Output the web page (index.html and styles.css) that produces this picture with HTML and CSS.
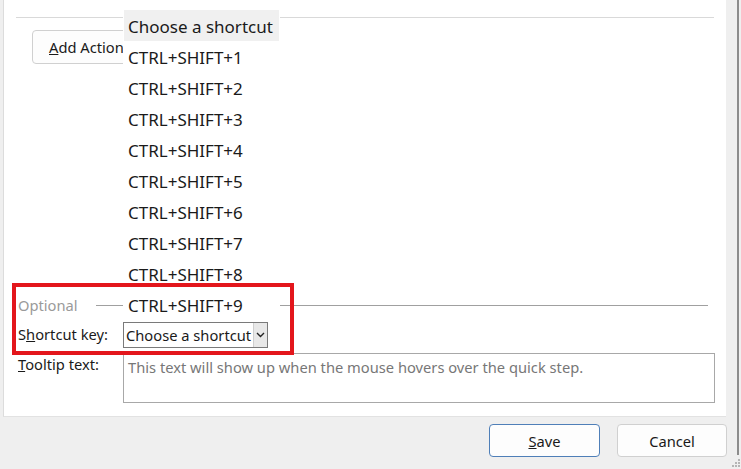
FILE: index.html
```html
<!DOCTYPE html>
<html lang="en">
<head>
  <meta charset="UTF-8">
  <title>Quick Step</title>
  <link rel="stylesheet" href="styles.css">
</head>
<body>
  <div class="window">
    <div class="panel">
      <div class="rule"></div>
      <div class="add-row">
        <button class="btn add-btn"><u>A</u>dd Action</button>
      </div>

      <div class="optional">
        <span class="optional-label">Optional</span>
        <span class="optional-line"></span>
      </div>

      <div class="field">
        <label class="field-label">S<u>h</u>ortcut key:</label>
        <div class="select">
          <span class="select-value">Choose a shortcut</span>
          <span class="select-arrow">
            <svg width="9" height="6" viewBox="0 0 9 6"><path d="M1 1 L4.5 4.5 L8 1" fill="none" stroke="#222" stroke-width="1.4"/></svg>
          </span>
        </div>
      </div>

      <div class="field tooltip-field">
        <label class="field-label"><u>T</u>ooltip text:</label>
        <div class="textarea">This text will show up when the mouse hovers over the quick step.</div>
      </div>

      <!-- open dropdown list of the shortcut select -->
      <ul class="dropdown">
        <li class="active">Choose a shortcut</li>
        <li>CTRL+SHIFT+1</li>
        <li>CTRL+SHIFT+2</li>
        <li>CTRL+SHIFT+3</li>
        <li>CTRL+SHIFT+4</li>
        <li>CTRL+SHIFT+5</li>
        <li>CTRL+SHIFT+6</li>
        <li>CTRL+SHIFT+7</li>
        <li>CTRL+SHIFT+8</li>
        <li>CTRL+SHIFT+9</li>
      </ul>

      <!-- annotation box -->
      <div class="highlight"></div>
    </div>

    <div class="footer">
      <button class="btn save-btn"><u>S</u>ave</button>
      <button class="btn cancel-btn">Cancel</button>
    </div>

    <div class="scroll-edge"></div>
    <svg class="grip" width="9" height="9" viewBox="0 0 9 9">
      <rect x="7" y="1" width="2" height="2" fill="#b5b5b5"/>
      <rect x="4" y="4" width="2" height="2" fill="#b5b5b5"/>
      <rect x="7" y="4" width="2" height="2" fill="#b5b5b5"/>
      <rect x="1" y="7" width="2" height="2" fill="#b5b5b5"/>
      <rect x="4" y="7" width="2" height="2" fill="#b5b5b5"/>
      <rect x="7" y="7" width="2" height="2" fill="#b5b5b5"/>
    </svg>
  </div>
</body>
</html>
```

FILE: styles.css
```css
* {
  box-sizing: border-box;
}

body {
  margin: 0;
  background: #efefef;
  font-family: 'Noto Sans', 'Segoe UI', sans-serif;
  font-size: 14.7px;
  color: #1a1a1a;
}

.window {
  position: relative;
  width: 741px;
  height: 469px;
  overflow: hidden;
}

.panel {
  position: relative;
  margin-left: 3px;
  width: 723px;
  height: 417px;
  background: #fff;
  border-left: 1px solid #dcdcdc;
  border-bottom: 1px solid #e2e2e2;
  padding-top: 17px;
}

.rule {
  height: 1px;
  margin: 0 12px 0 12px;
  background: #d9d9d9;
}

.add-row {
  padding: 12px 0 0 28px;
}

.btn {
  font-family: inherit;
  font-size: 14.7px;
  color: #1a1a1a;
  background: #fdfdfd;
  border: 1px solid #d0d0d0;
  border-radius: 4px;
  cursor: pointer;
}

.add-btn {
  height: 34px;
  width: 112px;
  padding: 0 0 0 16px;
  text-align: left;
}

.optional {
  display: flex;
  align-items: center;
  margin: 230px 18px 0 14px;
  height: 22px;
}

.optional-label {
  color: #9a9a9a;
  width: 78px;
}

.optional-line {
  flex: 1;
  height: 1px;
  background: #a0a0a0;
}

.field {
  display: flex;
  margin: 6px 0 0 14px;
}

.field-label {
  width: 105px;
  line-height: 25px;
}

.select {
  display: flex;
  width: 145px;
  height: 26px;
  border: 1px solid #7a7a7a;
  background: #fff;
}

.select-value {
  flex: 1;
  padding-left: 2px;
  line-height: 24px;
  white-space: nowrap;
  overflow: hidden;
}

.select-arrow {
  width: 14px;
  display: flex;
  align-items: center;
  justify-content: center;
  background: #e8e8e8;
  border-left: 1px solid #cfcfcf;
}

.tooltip-field {
  margin-top: 5px;
}

.tooltip-field .field-label {
  line-height: 22px;
}

.textarea {
  width: 592px;
  height: 50px;
  border: 1px solid #a8a8a8;
  color: #777;
  padding: 3px 4px;
  white-space: nowrap;
}

.dropdown {
  position: absolute;
  left: 119px;
  top: 10px;
  width: 157px;
  margin: 0;
  padding: 0;
  list-style: none;
  background: #fff;
  font-size: 17px;
}

.dropdown li {
  height: 31px;
  line-height: 33px;
  padding-left: 5px;
  white-space: nowrap;
}

.dropdown li.active {
  background: #f0f0f0;
  margin-left: 1px;
  margin-right: 1px;
  padding-left: 4px;
}

.highlight {
  position: absolute;
  left: 8px;
  top: 283px;
  width: 282px;
  height: 72px;
  border: 4px solid #e3161c;
}

.footer {
  display: flex;
  justify-content: flex-end;
  gap: 17px;
  padding: 7px 14px 0 0;
}

.save-btn,
.cancel-btn {
  width: 111px;
  height: 33px;
}

.save-btn {
  border-color: #4f7fb8;
}

.cancel-btn {
  width: 110px;
}

.scroll-edge {
  position: absolute;
  right: 2px;
  top: 0;
  width: 2px;
  height: 455px;
  background: #8c8c8c;
}

.grip {
  position: absolute;
  right: 1px;
  bottom: 2px;
}
```
